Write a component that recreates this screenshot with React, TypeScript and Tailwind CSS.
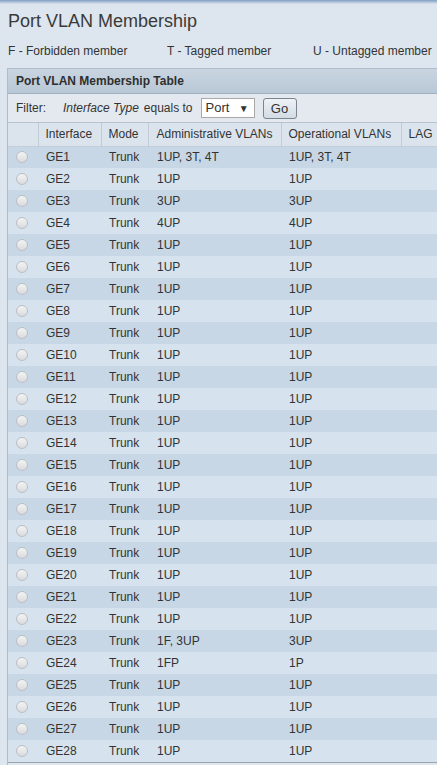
import React from "react";

type Row = { name: string; admin: string; oper: string };

const rows: Row[] = Array.from({ length: 28 }, (_, i) => {
  const n = i + 1;
  let admin = "1UP";
  let oper = "1UP";
  if (n === 1) {
    admin = "1UP, 3T, 4T";
    oper = "1UP, 3T, 4T";
  } else if (n === 3) {
    admin = "3UP";
    oper = "3UP";
  } else if (n === 4) {
    admin = "4UP";
    oper = "4UP";
  } else if (n === 23) {
    admin = "1F, 3UP";
    oper = "3UP";
  } else if (n === 24) {
    admin = "1FP";
    oper = "1P";
  }
  return { name: `GE${n}`, admin, oper };
});

function Radio() {
  return (
    <span className="block h-[12px] w-[12px] rounded-full border border-[#b9bec4] bg-gradient-to-b from-[#f4f4f4] to-[#d9dadc]" />
  );
}

export default function App() {
  return (
    <div
      className="h-[765px] w-[437px] overflow-hidden bg-gradient-to-b from-[#7f9fc2] via-[#dbe4ec] to-[#dde6ee] bg-[length:100%_8px] bg-no-repeat text-[#333] [font-family:'Liberation_Sans',Arial,sans-serif]"
      style={{ backgroundColor: "#dde6ee" }}
    >
      <div className="pl-[8px] pt-[9px]">
        <h1 className="text-[18px] leading-[24px] font-normal text-[#3a3a3a]">Port VLAN Membership</h1>
        <div className="mt-[11px] flex text-[12px] leading-[14px]">
          <span className="w-[159px]">F - Forbidden member</span>
          <span className="w-[146px]">T - Tagged member</span>
          <span>U - Untagged member</span>
        </div>
      </div>

      <div className="ml-[7px] mt-[10px] w-[470px] border-l border-t border-[#aebccb]">
        <div className="flex h-[25px] items-center border-b border-[#9fb0c1] bg-gradient-to-b from-[#c9d5e1] to-[#b9c8d6] pl-[8px] text-[12px] font-bold text-[#2f2f2f]">
          Port VLAN Membership Table
        </div>
        <div className="flex h-[29px] items-center border-b border-[#b7c3cf] bg-[#e3e9ef] pl-[8px] text-[12px]">
          <span>Filter:</span>
          <span className="ml-[17px] italic">Interface Type</span>
          <span className="ml-[5px]">equals to</span>
          <div className="ml-[8px] flex h-[20px] w-[54px] items-center justify-between border border-[#a9a9a9] bg-white pl-[4px] pr-[5px] text-[13px]">
            <span>Port</span>
            <span className="text-[10px]">▼</span>
          </div>
          <button className="ml-[8px] h-[21px] w-[34px] rounded-[3px] border border-[#7b8590] bg-gradient-to-b from-[#eef2f6] to-[#d3dbe3] text-[13px] leading-none text-[#333]">
            Go
          </button>
        </div>
        <table className="w-[470px] table-fixed border-collapse text-[12px]">
          <colgroup>
            <col className="w-[30px]" />
            <col className="w-[63px]" />
            <col className="w-[47px]" />
            <col className="w-[133px]" />
            <col className="w-[120px]" />
            <col className="w-[77px]" />
          </colgroup>
          <thead>
            <tr className="h-[23px] border-b border-[#c3ced9] bg-[#dbe4ed] text-left">
              <th className="p-0" />
              <th className="border-l border-[#c0cbd6] pl-[7px] font-normal">Interface</th>
              <th className="border-l border-[#c0cbd6] pl-[7px] font-normal">Mode</th>
              <th className="border-l border-[#c0cbd6] pl-[8px] font-normal">Administrative VLANs</th>
              <th className="border-l border-[#c0cbd6] pl-[7px] font-normal">Operational VLANs</th>
              <th className="border-l border-[#c0cbd6] pl-[7px] font-normal">LAG</th>
            </tr>
          </thead>
          <tbody>
            {rows.map((r, i) => (
              <tr key={r.name} className={i % 2 === 0 ? "h-[22px] bg-[#c8d7e5]" : "h-[22px] bg-[#d6e3ee]"}>
                <td className="pl-[8px]">
                  <Radio />
                </td>
                <td className="pl-[8px]">{r.name}</td>
                <td className="pl-[8px]">Trunk</td>
                <td className="pl-[9px]">{r.admin}</td>
                <td className="pl-[8px]">{r.oper}</td>
                <td />
              </tr>
            ))}
          </tbody>
        </table>
        <div className="border-t border-[#9aa4ae] h-[10px] bg-[#e0e8ef]" />
      </div>
    </div>
  );
}
